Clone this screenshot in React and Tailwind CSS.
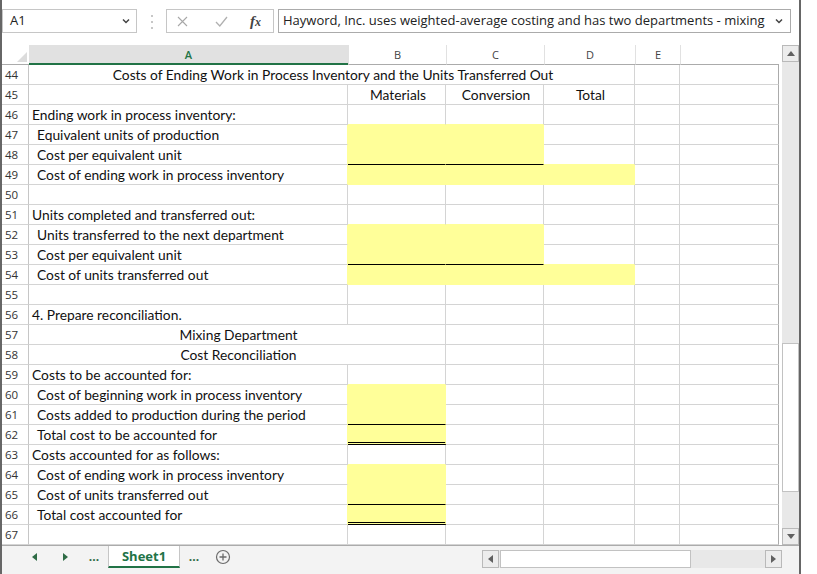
import React from "react";

const YELLOW = "bg-[#ffff99]";

// column widths (row header is separate)
const COLS = [
  { key: "A", w: "w-[319px]" },
  { key: "B", w: "w-[98px]" },
  { key: "C", w: "w-[98px]" },
  { key: "D", w: "w-[91px]" },
  { key: "E", w: "w-[45px]" },
  { key: "F", w: "w-[99px]" },
];

const MERGE_W = { 2: "w-[417px]", 4: "w-[606px]" };

const ROWS = [
  { n: 44, merge: 4, align: "center", a: "Costs of Ending Work in Process Inventory and the Units Transferred Out" },
  { n: 45, b: "Materials", c: "Conversion", d: "Total" },
  { n: 46, a: "Ending work in process inventory:" },
  { n: 47, a: "Equivalent units of production", indent: true, fill: ["B", "C"] },
  { n: 48, a: "Cost per equivalent unit", indent: true, fill: ["B", "C"], line: { B: "thin", C: "thin" } },
  { n: 49, a: "Cost of ending work in process inventory", indent: true, fill: ["B", "C", "D"] },
  { n: 50 },
  { n: 51, a: "Units completed and transferred out:" },
  { n: 52, a: "Units transferred to the next department", indent: true, fill: ["B", "C"] },
  { n: 53, a: "Cost per equivalent unit", indent: true, fill: ["B", "C"], line: { B: "thin", C: "thin" } },
  { n: 54, a: "Cost of units transferred out", indent: true, fill: ["B", "C", "D"] },
  { n: 55 },
  { n: 56, a: "4. Prepare reconciliation." },
  { n: 57, merge: 2, align: "center", a: "Mixing Department" },
  { n: 58, merge: 2, align: "center", a: "Cost Reconciliation" },
  { n: 59, a: "Costs to be accounted for:" },
  { n: 60, a: "Cost of beginning work in process inventory", indent: true, fill: ["B"] },
  { n: 61, a: "Costs added to production during the period", indent: true, fill: ["B"], line: { B: "thin" } },
  { n: 62, a: "Total cost to be accounted for", indent: true, fill: ["B"], line: { B: "double" } },
  { n: 63, a: "Costs accounted for as follows:" },
  { n: 64, a: "Cost of ending work in process inventory", indent: true, fill: ["B"] },
  { n: 65, a: "Cost of units transferred out", indent: true, fill: ["B"], line: { B: "thin" } },
  { n: 66, a: "Total cost accounted for", indent: true, fill: ["B"], line: { B: "double" } },
  { n: 67 },
];

const fillOf = (n) => (ROWS.find((r) => r.n === n) || {}).fill || [];

function buildCells(row) {
  const fill = row.fill || [];
  const below = fillOf(row.n + 1);
  const out = [];
  for (let i = 0; i < COLS.length; i++) {
    const col = COLS[i];
    let w = col.w;
    let span = 1;
    if (i === 0 && row.merge) {
      w = MERGE_W[row.merge];
      span = row.merge;
    }
    const next = COLS[i + span];
    const filled = fill.includes(col.key);
    const nextFilled = next ? fill.includes(next.key) : false;
    const belowFilled = below.includes(col.key);
    const line = row.line ? row.line[col.key] : null;

    let right = "border-r-[#d4d4d4]";
    if (!next) right = "border-r-[#ababab]";
    else if (filled || nextFilled) right = "border-r-[#ffff99]";

    let bottom = "border-b border-b-[#d4d4d4]";
    if (line === "thin") bottom = "border-b border-b-black";
    else if (line === "double") bottom = "border-b-[3px] border-double border-b-black";
    else if (filled || belowFilled) bottom = "border-b border-b-[#ffff99]";

    const text = { A: row.a, B: row.b, C: row.c, D: row.d }[col.key];
    const center = row.align === "center" || col.key !== "A";

    out.push({ key: col.key, w, filled, right, bottom, text, center, indent: row.indent && col.key === "A" });
    i += span - 1;
  }
  return out;
}

const Chevron = ({ className }) => (
  <svg viewBox="0 0 10 10" className={className}>
    <path d="M2 3.5 L5 6.5 L8 3.5" fill="none" stroke="#444" strokeWidth="1.5" />
  </svg>
);

function FormulaBar() {
  return (
    <div className="flex h-[45px] items-start pt-[9px] font-['Open_Sans',sans-serif]">
      <div className="flex h-[24px] w-[135px] items-center justify-between border border-[#c6c6c6] pl-[7px] pr-[5px] text-[13px] text-[#222]">
        <span>A1</span>
        <Chevron className="h-[10px] w-[10px]" />
      </div>
      <div className="flex w-[29px] items-center justify-center pt-[5px]">
        <svg viewBox="0 0 4 16" className="h-[16px] w-[4px]">
          <circle cx="2" cy="2" r="1" fill="#b5b5b5" />
          <circle cx="2" cy="8" r="1" fill="#b5b5b5" />
          <circle cx="2" cy="14" r="1" fill="#b5b5b5" />
        </svg>
      </div>
      <div className="flex h-[24px] w-[108px] items-center border border-[#c6c6c6]">
        <svg viewBox="0 0 11 11" className="ml-[10px] h-[11px] w-[11px]">
          <path d="M1 1 L10 10 M10 1 L1 10" stroke="#a8a8a8" strokeWidth="1.1" />
        </svg>
        <svg viewBox="0 0 13 11" className="ml-[27px] h-[11px] w-[13px]">
          <path d="M1 6 L4.8 10 L12 1" fill="none" stroke="#b0b0b0" strokeWidth="1.3" />
        </svg>
        <span className="ml-[22px] font-['Liberation_Serif',serif] text-[15px] font-semibold italic leading-none text-[#444]">
          f<span className="text-[12px]">x</span>
        </span>
      </div>
      <div className="ml-[4px] flex h-[24px] w-[513px] items-center justify-between border border-[#ababab] pl-[4px] pr-[6px] text-[13px] text-[#222]">
        <span className="whitespace-nowrap">
          Hayword, Inc. uses weighted-average costing and has two departments - mixing
        </span>
        <Chevron className="h-[10px] w-[10px]" />
      </div>
    </div>
  );
}

function HeaderRow() {
  return (
    <div className="flex h-[20px] font-['Open_Sans',sans-serif] text-[11px] text-[#444]">
      <div className="flex w-[27px] items-end justify-end border-b border-b-[#ababab] pb-[2px] pr-[2px]">
        <svg viewBox="0 0 10 10" className="h-[10px] w-[10px]">
          <path d="M10 0 L10 10 L0 10 Z" fill="#dcdcdc" />
        </svg>
      </div>
      <div className="flex w-[319px] items-center justify-center border-b-2 border-b-[#217346] bg-[#e1e1e1] pt-[2px] font-semibold text-[#217346]">
        A
      </div>
      {["B", "C", "D", "E", ""].map((h, i) => (
        <div
          key={i}
          className={
            "flex items-center justify-center border-b border-l border-b-[#ababab] border-l-[#e1e1e1] pt-[2px] " +
            ["w-[98px]", "w-[98px]", "w-[91px]", "w-[45px]", "w-[99px]"][i]
          }
        >
          {h}
        </div>
      ))}
    </div>
  );
}

function SheetRow({ row }) {
  const cells = buildCells(row);
  return (
    <div className="flex h-[20px]">
      <div className="flex w-[27px] items-center border-b border-r border-b-[#d4d4d4] border-r-[#c6c6c6] pl-[3px] pt-px font-['Open_Sans',sans-serif] text-[11.5px] text-[#333]">
        {row.n}
      </div>
      {cells.map((c) => (
        <div
          key={c.key}
          className={[
            "flex h-[20px] items-center border-r pt-px whitespace-nowrap",
            c.w,
            c.right,
            c.bottom,
            c.filled ? YELLOW : "",
            c.center ? "justify-center" : "",
            c.indent ? "pl-[8px]" : "pl-[3px]",
          ].join(" ")}
        >
          {c.text}
        </div>
      ))}
    </div>
  );
}

function VScroll() {
  return (
    <div className="ml-[3px] flex w-[17px] flex-col bg-[#e8e8e8]">
      <div className="flex h-[17px] items-center justify-center border border-[#b9b9b9] bg-[#ececec]">
        <svg viewBox="0 0 8 5" className="h-[5px] w-[8px]">
          <path d="M0 5 L4 0 L8 5 Z" fill="#606060" />
        </svg>
      </div>
      <div className="h-[281px]" />
      <div className="h-[149px] border border-[#c2c2c2] bg-white" />
      <div className="flex-1" />
      <div className="flex h-[17px] items-center justify-center border border-[#b9b9b9] bg-[#ececec]">
        <svg viewBox="0 0 8 5" className="h-[5px] w-[8px]">
          <path d="M0 0 L4 5 L8 0 Z" fill="#606060" />
        </svg>
      </div>
    </div>
  );
}

function TabBar() {
  return (
    <div className="flex h-[29px] items-start border-t border-t-[#ababab] bg-[#f3f3f3] font-['Open_Sans',sans-serif]">
      <div className="w-[24px]" />
      <div className="flex h-[22px] w-[16px] items-center justify-center">
        <svg viewBox="0 0 5 8" className="h-[8px] w-[5px]">
          <path d="M5 0 L0 4 L5 8 Z" fill="#2e6b45" />
        </svg>
      </div>
      <div className="w-[15px]" />
      <div className="flex h-[22px] w-[16px] items-center justify-center">
        <svg viewBox="0 0 5 8" className="h-[8px] w-[5px]">
          <path d="M0 0 L5 4 L0 8 Z" fill="#2e6b45" />
        </svg>
      </div>
      <div className="w-[7px]" />
      <div className="flex h-[22px] w-[28px] items-center justify-center text-[12px] font-bold text-[#2e6b45]">...</div>
      <div className="flex h-[22px] w-[72px] items-center justify-center border-b-2 border-l border-r border-b-[#217346] border-l-[#c6c6c6] border-r-[#c6c6c6] bg-white pt-px text-[13px] font-bold text-[#217346]">
        Sheet1
      </div>
      <div className="flex h-[22px] w-[28px] items-center justify-center text-[12px] font-bold text-[#2e6b45]">...</div>
      <div className="flex h-[22px] w-[30px] items-center justify-center">
        <svg viewBox="0 0 16 16" className="h-[16px] w-[16px]">
          <circle cx="8" cy="8" r="6.5" fill="none" stroke="#6b6b6b" strokeWidth="1.2" />
          <path d="M8 4.5 V11.5 M4.5 8 H11.5" stroke="#6b6b6b" strokeWidth="1.3" />
        </svg>
      </div>
      <div className="flex-1" />
      <div className="mt-[4px] flex h-[18px] w-[300px] bg-[#e8e8e8]">
        <div className="flex w-[17px] items-center justify-center border border-[#b9b9b9] bg-[#ececec]">
          <svg viewBox="0 0 5 8" className="h-[8px] w-[5px]">
            <path d="M5 0 L0 4 L5 8 Z" fill="#606060" />
          </svg>
        </div>
        <div className="ml-[1px] w-[191px] border border-[#c2c2c2] bg-white" />
        <div className="flex-1" />
        <div className="flex w-[17px] items-center justify-center border border-[#b9b9b9] bg-[#ececec]">
          <svg viewBox="0 0 5 8" className="h-[8px] w-[5px]">
            <path d="M0 0 L5 4 L0 8 Z" fill="#606060" />
          </svg>
        </div>
      </div>
      <div className="w-[17px]" />
    </div>
  );
}

export default function App() {
  return (
    <div className="flex h-[574px] w-[817px] overflow-hidden bg-white">
      <div className="flex w-[799px] flex-col border-l-2 border-l-[#666666]">
        <FormulaBar />
        <div className="flex h-[500px]">
          <div className="w-[777px] font-['Lato',sans-serif] text-[13.8px] text-[#111]">
            <HeaderRow />
            {ROWS.map((r) => (
              <SheetRow key={r.n} row={r} />
            ))}
          </div>
          <VScroll />
        </div>
        <TabBar />
      </div>
      <div className="w-[2px] bg-[#666666]" />
      <div className="flex-1" />
    </div>
  );
}
